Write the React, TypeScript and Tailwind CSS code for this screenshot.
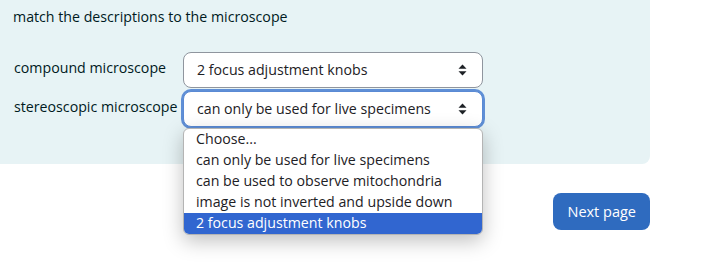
import React from "react";

const OPTIONS = [
  "Choose...",
  "can only be used for live specimens",
  "can be used to observe mitochondria",
  "image is not inverted and upside down",
  "2 focus adjustment knobs",
];

function Carets() {
  return (
    <svg width="9" height="12" viewBox="0 0 9 12" className="shrink-0">
      <path d="M4.5 0.5 L8.5 4.8 H0.5 Z" fill="#1d2125" />
      <path d="M4.5 11.5 L8.5 7.2 H0.5 Z" fill="#1d2125" />
    </svg>
  );
}

function Select({ value, focused }: { value: string; focused?: boolean }) {
  return (
    <div
      className={
        focused
          ? "flex h-[36px] w-[300px] items-center justify-between rounded-[8px] border border-[#5a8ad4] bg-white pl-[13px] pr-[15px] text-[#1d2125] shadow-[0_0_0_2px_#5f8fd6]"
          : "flex h-[36px] w-[300px] items-center justify-between rounded-[8px] border border-[#8f959e] bg-white pl-[13px] pr-[15px] text-[#1d2125]"
      }
    >
      <span>{value}</span>
      <Carets />
    </div>
  );
}

export default function App() {
  return (
    <div className="h-[262px] w-[709px] overflow-hidden bg-white text-[14.2px] text-[#001a1e] [font-family:'Open_Sans',sans-serif]">
      <div className="w-[650px]">
        <div className="rounded-br-[8px] bg-[#e7f3f5] pb-[37px] pl-[13px] pt-[6px]">
          <p className="leading-[22px]">match the descriptions to the microscope</p>
          <div className="mt-[24px] flex flex-col gap-[3px]">
            <div className="flex items-center">
              <div className="w-[170px] whitespace-nowrap pb-[4px] pl-[1px] leading-[22px]">compound microscope</div>
              <Select value="2 focus adjustment knobs" />
            </div>
            <div className="relative flex items-center">
              <div className="w-[170px] whitespace-nowrap pb-[4px] pl-[1px] leading-[22px]">stereoscopic microscope</div>
              <Select value="can only be used for live specimens" focused />
              <ul className="absolute left-[170px] top-[37px] z-10 w-[300px] overflow-hidden rounded-[6px] border border-[#b4b4b4] bg-white text-[#1d2125] shadow-[0_6px_20px_rgba(0,0,0,0.25)]">
                {OPTIONS.map((o, i) => (
                  <li
                    key={o}
                    className={
                      i === OPTIONS.length - 1
                        ? "h-[21px] bg-[#3166d0] pl-[12px] leading-[20px] text-white"
                        : "h-[21px] pl-[12px] leading-[20px]"
                    }
                  >
                    {o}
                  </li>
                ))}
              </ul>
            </div>
          </div>
        </div>
        <div className="flex justify-end pt-[29px]">
          <button className="h-[37px] rounded-[8px] bg-[#2f6bbf] px-[14px] text-[14.5px] text-white">Next page</button>
        </div>
      </div>
    </div>
  );
}
